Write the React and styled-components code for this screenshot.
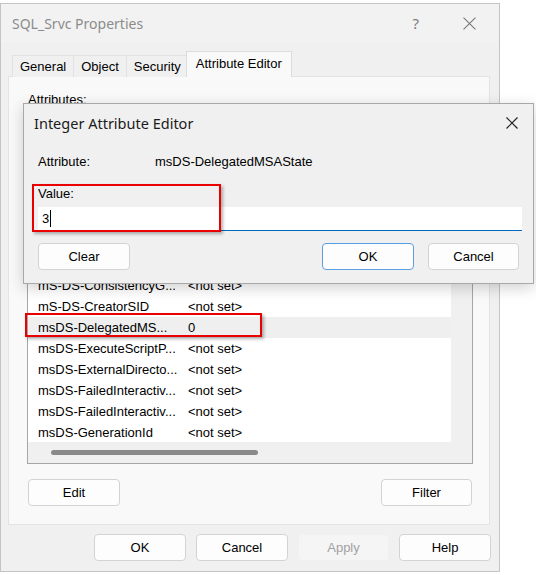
import React from "react";
import styled, { createGlobalStyle } from "styled-components";

const GlobalStyle = createGlobalStyle`
  html, body {
    margin: 0;
    background: #ffffff;
  }
  body {
    font-family: "Liberation Sans", Arial, sans-serif;
    font-size: 13px;
    color: #000;
  }
`;

const Stage = styled.div`
  position: relative;
  width: 536px;
  height: 575px;
  padding-top: 3px;
  box-sizing: border-box;
  overflow: hidden;
`;

const Window = styled.div`
  width: 500px;
  height: 569px;
  box-sizing: border-box;
  border: 1px solid #c4c4c4;
  background: #f0f0f0;
  display: flex;
  flex-direction: column;
`;

const TitleBar = styled.div`
  height: 38px;
  display: flex;
  align-items: center;
  padding-left: 11px;
  background: #f2f2f2;
`;

const TitleText = styled.div`
  flex: 1;
  font-family: "Noto Sans", "Open Sans", sans-serif;
  font-size: 14px;
  color: #8c8c8c;
`;

const HelpGlyph = styled.span`
  font-family: "Noto Sans", sans-serif;
  font-size: 15px;
  color: #7c7c7c;
  margin-right: 44px;
`;

const CloseBox = styled.span`
  display: flex;
  margin-right: ${(p) => p.$right}px;
`;

const TabStrip = styled.div`
  height: 34px;
  display: flex;
  align-items: flex-end;
  padding-left: 11px;
`;

const Tab = styled.div`
  box-sizing: border-box;
  height: ${(p) => (p.$active ? 26 : 22)}px;
  padding: 0 ${(p) => (p.$active ? 9 : 7)}px;
  margin: 0 ${(p) => (p.$active ? -2 : 0)}px -1px;
  display: flex;
  align-items: center;
  background: ${(p) => (p.$active ? "#f9f9f9" : "#f0f0f0")};
  border: 1px solid ${(p) => (p.$active ? "#dcdcdc" : "#e2e2e2")};
  border-bottom: none;
  border-right: ${(p) => (p.$active ? "1px solid #dcdcdc" : "none")};
  padding-bottom: ${(p) => (p.$active ? 2 : 0)}px;
  position: relative;
  z-index: ${(p) => (p.$active ? 1 : 0)};
`;

const TabPanel = styled.div`
  box-sizing: border-box;
  height: 449px;
  margin: 0 9px 0 7px;
  background: #f9f9f9;
  border: 1px solid #e3e3e3;
  display: flex;
  flex-direction: column;
`;

const FieldLabel = styled.div`
  margin: 15px 0 0 19px;
  height: 16px;
  line-height: 16px;
`;

const ListView = styled.div`
  box-sizing: border-box;
  margin: 3px 0 0 18px;
  width: 446px;
  height: 353px;
  border: 1px solid #a6a6a6;
  background: #ffffff;
  display: grid;
  grid-template-columns: 1fr 21px;
  grid-template-rows: 1fr 21px;
`;

/* list is scrolled: rows above mS-DS-ConsistencyG... sit under the dialog */
const ListBody = styled.div`
  overflow: hidden;
  padding-top: 163px;
`;

const Row = styled.div`
  height: 21px;
  display: flex;
  align-items: center;
  background: ${(p) => (p.$selected ? "#efefef" : "transparent")};
`;

const NameCell = styled.div`
  box-sizing: border-box;
  width: 155px;
  padding: 0 5px 0 10px;
  white-space: nowrap;
  overflow: hidden;
`;

const ValueCell = styled.div`
  padding-left: 5px;
  white-space: nowrap;
`;

const VScroll = styled.div`
  grid-row: 1 / 3;
  grid-column: 2;
  background: #f0f0f0;
`;

const HScroll = styled.div`
  background: #f0f0f0;
  display: flex;
  align-items: center;
`;

const Thumb = styled.div`
  margin: 0 0 0 23px;
  width: 207px;
  height: 5px;
  border-radius: 3px;
  background: #8a8a8a;
`;

const ButtonRow = styled.div`
  margin: 15px 0 0 19px;
  width: 444px;
  display: flex;
  justify-content: space-between;
`;

const Button = styled.div`
  box-sizing: border-box;
  width: ${(p) => p.$w || 92}px;
  height: 27px;
  display: flex;
  align-items: center;
  justify-content: center;
  border-radius: 4px;
  background: ${(p) => (p.$disabled ? "#f5f5f5" : "#fdfdfd")};
  border: 1px solid
    ${(p) => (p.$default ? "#5b9fe3" : p.$disabled ? "#f0f0f0" : "#d3d3d3")};
  color: ${(p) => (p.$disabled ? "#a2a2a2" : "#000")};
`;

const Footer = styled.div`
  margin-top: 9px;
  padding-right: 8px;
  display: flex;
  justify-content: flex-end;
  gap: 10px;
`;

const Dialog = styled.div`
  position: absolute;
  left: 23px;
  top: 103px;
  width: 511px;
  height: 181px;
  box-sizing: border-box;
  border: 1px solid #a8a8a8;
  background: #f0f0f0;
  box-shadow: 0 4px 14px rgba(0, 0, 0, 0.18);
  display: flex;
  flex-direction: column;
`;

const DialogTitle = styled.div`
  height: 37px;
  display: flex;
  align-items: center;
  padding-left: 10px;
  font-family: "Noto Sans", "Open Sans", sans-serif;
  font-size: 14.5px;
  color: #1b1b1b;
`;

const DialogBody = styled.div`
  padding: 0 11px 0 14px;
  display: flex;
  flex-direction: column;
`;

const InfoRow = styled.div`
  margin-top: ${(p) => p.$top}px;
  height: 16px;
  line-height: 16px;
  display: flex;
`;

const InfoKey = styled.div`
  width: 117px;
`;

const TextInput = styled.div`
  margin-top: 5px;
  height: 24px;
  box-sizing: border-box;
  background: #ffffff;
  border-bottom: 1px solid #0067c0;
  display: flex;
  align-items: center;
  padding-left: 4px;
`;

const Caret = styled.span`
  width: 1px;
  height: 17px;
  background: #000;
  margin-left: 1px;
`;

const DialogButtons = styled.div`
  margin-top: 12px;
  padding-right: 3px;
  display: flex;
  gap: 14px;
`;

const Spacer = styled.div`
  flex: 1;
`;

const Highlight = styled.div`
  position: absolute;
  left: ${(p) => p.$left}px;
  top: ${(p) => p.$top}px;
  width: ${(p) => p.$w}px;
  height: ${(p) => p.$h}px;
  box-sizing: border-box;
  border: 2px solid #ea0000;
  box-shadow: 2px 2px 3px rgba(0, 0, 0, 0.3);
  pointer-events: none;
`;

const CloseIcon = ({ size, color, stroke }) => (
  <svg width={size} height={size} viewBox="0 0 12 12">
    <path d="M0.5 0.5 L11.5 11.5 M11.5 0.5 L0.5 11.5" stroke={color} strokeWidth={stroke} fill="none" />
  </svg>
);

const tabs = ["General", "Object", "Security", "Attribute Editor"];

const attributes = [
  ["mS-DS-ConsistencyG...", "<not set>"],
  ["mS-DS-CreatorSID", "<not set>"],
  ["msDS-DelegatedMS...", "0"],
  ["msDS-ExecuteScriptP...", "<not set>"],
  ["msDS-ExternalDirecto...", "<not set>"],
  ["msDS-FailedInteractiv...", "<not set>"],
  ["msDS-FailedInteractiv...", "<not set>"],
  ["msDS-GenerationId", "<not set>"],
];

export default function App() {
  return (
    <Stage>
      <GlobalStyle />
      <Window>
        <TitleBar>
          <TitleText>SQL_Srvc Properties</TitleText>
          <HelpGlyph>?</HelpGlyph>
          <CloseBox $right={23}>
            <CloseIcon size={13} color="#777" stroke={1} />
          </CloseBox>
        </TitleBar>
        <TabStrip>
          {tabs.map((t, i) => (
            <Tab key={t} $active={i === tabs.length - 1}>
              {t}
            </Tab>
          ))}
        </TabStrip>
        <TabPanel>
          <FieldLabel>Attributes:</FieldLabel>
          <ListView>
            <ListBody>
              {attributes.map(([name, value], i) => (
                <Row key={i} $selected={name === "msDS-DelegatedMS..."}>
                  <NameCell>{name}</NameCell>
                  <ValueCell>{value}</ValueCell>
                </Row>
              ))}
            </ListBody>
            <VScroll />
            <HScroll>
              <Thumb />
            </HScroll>
          </ListView>
          <ButtonRow>
            <Button>Edit</Button>
            <Button $w={91}>Filter</Button>
          </ButtonRow>
        </TabPanel>
        <Footer>
          <Button>OK</Button>
          <Button>Cancel</Button>
          <Button $w={91} $disabled>
            Apply
          </Button>
          <Button>Help</Button>
        </Footer>
      </Window>

      <Dialog>
        <DialogTitle>
          <Spacer>Integer Attribute Editor</Spacer>
          <CloseBox $right={15}>
            <CloseIcon size={12} color="#222" stroke={1.2} />
          </CloseBox>
        </DialogTitle>
        <DialogBody>
          <InfoRow $top={13}>
            <InfoKey>Attribute:</InfoKey>
            <div>msDS-DelegatedMSAState</div>
          </InfoRow>
          <InfoRow $top={16}>Value:</InfoRow>
          <TextInput>
            3<Caret />
          </TextInput>
          <DialogButtons>
            <Button>Clear</Button>
            <Spacer />
            <Button $default>OK</Button>
            <Button $w={91}>Cancel</Button>
          </DialogButtons>
        </DialogBody>
      </Dialog>

      <Highlight $left={32} $top={184} $w={189} $h={48} />
      <Highlight $left={25} $top={313} $w={237} $h={24} />
    </Stage>
  );
}
